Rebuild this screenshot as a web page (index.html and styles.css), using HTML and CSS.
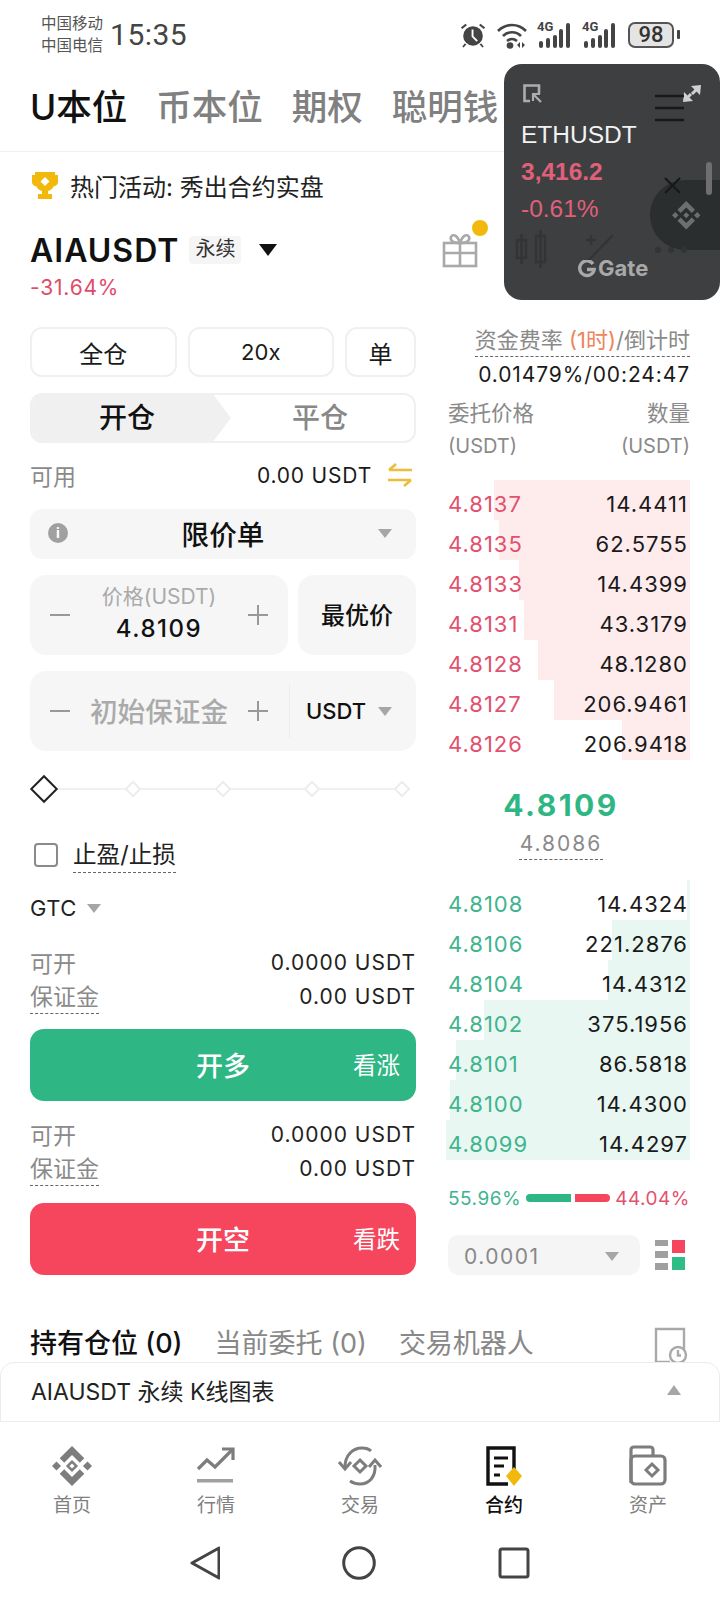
FILE: index.html
```html
<!DOCTYPE html>
<html lang="zh">
<head>
  <meta charset="UTF-8" />
  <meta name="viewport" content="width=device-width, initial-scale=1.0"/>
  <title>合约</title>
  <link rel="stylesheet" href="styles.css">
</head>
<body>
<div class="page">

  <header class="statusbar">
    <div class="carrier"><span>中国移动</span><span>中国电信</span></div>
    <div class="clock">15:35</div>
    <div class="status-icons">
      <svg width="28" height="28" viewBox="0 0 30 28"><g fill="#444"><circle cx="15" cy="15" r="10.500"/><path d="M2 6l5-4 1.500 1.600-5 4zM28 6l-5-4-1.500 1.600 5 4zM6 23l-2.500 3.500 1.500 1 3-3.500zM24 23l2.500 3.500-1.500 1-3-3.500z"/></g><path d="M14.500 8v7.500l5 5" fill="none" stroke="#fff" stroke-width="2"/></svg>
      <svg width="32" height="28" viewBox="0 0 32 28"><g fill="none" stroke="#444" stroke-width="2.600"><path d="M2 10c8-8 20-8 28 0"/><path d="M7 15c5-5 13-5 18 0"/><path d="M11 20c3-2.500 7-2.500 10 0"/></g><circle cx="14" cy="24.500" r="3.300" fill="#444"/><path d="M24 21v6l-3-3zM26 21v6l3-3z" fill="#444"/></svg>
      <div class="signal"><span class="signal-label">4G</span><svg width="36" height="28" viewBox="0 0 36 28"><g fill="#444"><rect x="2" y="20" width="4" height="7" rx="2"/><rect x="9" y="17" width="4" height="10" rx="2"/><rect x="16" y="14" width="4" height="13" rx="2"/><rect x="22" y="8" width="4" height="19" rx="2"/><rect x="29" y="2" width="4" height="25" rx="2"/></g></svg></div>
      <div class="signal"><span class="signal-label">4G</span><svg width="36" height="28" viewBox="0 0 36 28"><g fill="#444"><rect x="2" y="20" width="4" height="7" rx="2"/><rect x="9" y="17" width="4" height="10" rx="2"/><rect x="16" y="14" width="4" height="13" rx="2"/><rect x="22" y="8" width="4" height="19" rx="2"/><rect x="29" y="2" width="4" height="25" rx="2"/></g></svg></div>
      <div class="battery">98</div><div class="battery-cap"></div>
    </div>
  </header>

  <nav class="top-tabs">
    <span class="top-tab active">U本位</span>
    <span class="top-tab">币本位</span>
    <span class="top-tab">期权</span>
    <span class="top-tab">聪明钱</span>
  </nav>

  <div class="promo">
    <svg width="26" height="27" viewBox="0 0 26 27"><path d="M3 0h20v3h3v7c0 2.500-2 4-4.500 4.500-1 2.500-3.500 4-5.500 4.500v3h4v5H6v-5h4v-3c-2-.500-4.500-2-5.500-4.500C2 14 0 12.500 0 10V3h3z" fill="#f0b90b"/><path d="M13 5l4.500 4.500L13 14 8.500 9.500z" fill="#fff"/></svg>
    <span>热门活动: 秀出合约实盘</span>
  </div>

  <div class="symbol">
    <div class="symbol-row">
      <span class="symbol-name">AIAUSDT</span>
      <span class="chip">永续</span>
      <span class="tri-down"></span>
      <div class="gift">
        <svg width="36" height="36" viewBox="0 0 36 36"><g fill="none" stroke="#a9a9a9" stroke-width="2.600"><rect x="2" y="11" width="32" height="23"/><path d="M2 21h32M18 11v23"/><path d="M18 11c-8 0-10-3-9-6s6-3 9 6c3-9 8-9 9-6s-1 6-9 6z"/></g></svg>
        <span class="gift-dot"></span>
      </div>
    </div>
    <div class="symbol-change">-31.64%</div>
  </div>

  <main class="trade">
    <section class="form-col">
      <div class="lev-row">
        <button class="lev-btn">全仓</button>
        <button class="lev-btn lev-num">20x</button>
        <button class="lev-btn lev-btn-small">单</button>
      </div>

      <div class="side-switch">
        <div class="side-on">开仓</div>
        <div class="side-off">平仓</div>
      </div>

      <div class="avail">
        <span class="muted">可用</span>
        <span class="avail-val">0.00 USDT
          <svg width="26" height="24" viewBox="0 0 26 24"><g fill="none" stroke="#ecbc3a" stroke-width="2.600"><path d="M25 7H2M9 1L2 7"/><path d="M1 17h23M17 23l7-6"/></g></svg>
        </span>
      </div>

      <div class="order-type">
        <span class="info-dot">i</span>
        <span class="order-type-name">限价单</span>
        <span class="tri-small"></span>
      </div>

      <div class="price-row">
        <div class="stepper price-box">
          <span class="step minus"></span>
          <div class="price-mid"><span class="price-label">价格(USDT)</span><span class="price-val">4.8109</span></div>
          <span class="step plus"></span>
        </div>
        <div class="best">最优价</div>
      </div>

      <div class="stepper margin-box">
        <span class="step minus"></span>
        <span class="margin-label">初始保证金</span>
        <span class="step plus"></span>
        <div class="margin-unit">USDT <span class="tri-small"></span></div>
      </div>

      <div class="slider">
        <span class="knob"></span>
        <span class="tick"></span><span class="tick"></span><span class="tick"></span><span class="tick"></span>
      </div>

      <div class="tpsl">
        <span class="checkbox"></span>
        <span class="dotted tpsl-text">止盈/止损</span>
      </div>

      <div class="gtc">GTC <span class="tri-small"></span></div>

      <div class="info-row first"><span class="muted">可开</span><span>0.0000 USDT</span></div>
      <div class="info-row"><span class="muted dotted">保证金</span><span>0.00 USDT</span></div>
      <button class="action buy"><span></span><span class="action-main">开多</span><span class="action-sub">看涨</span></button>

      <div class="info-row first"><span class="muted">可开</span><span>0.0000 USDT</span></div>
      <div class="info-row"><span class="muted dotted">保证金</span><span>0.00 USDT</span></div>
      <button class="action sell"><span></span><span class="action-main">开空</span><span class="action-sub">看跌</span></button>
    </section>

    <section class="book-col">
      <div class="funding"><span class="dotted">资金费率 <em>(1时)</em>/倒计时</span></div>
      <div class="funding-val">0.01479%/00:24:47</div>
      <div class="book-head"><span>委托价格</span><span>数量</span></div>
      <div class="book-unit"><span>(USDT)</span><span>(USDT)</span></div>

      <div class="asks">
        <div class="row"><i class="bar" style="width:196px"></i><span class="px">4.8137</span><span class="qty">14.4411</span></div>
        <div class="row"><i class="bar" style="width:191px"></i><span class="px">4.8135</span><span class="qty">62.5755</span></div>
        <div class="row"><i class="bar" style="width:171px"></i><span class="px">4.8133</span><span class="qty">14.4399</span></div>
        <div class="row"><i class="bar" style="width:166px"></i><span class="px">4.8131</span><span class="qty">43.3179</span></div>
        <div class="row"><i class="bar" style="width:152px"></i><span class="px">4.8128</span><span class="qty">48.1280</span></div>
        <div class="row"><i class="bar" style="width:136px"></i><span class="px">4.8127</span><span class="qty">206.9461</span></div>
        <div class="row"><i class="bar" style="width:68px"></i><span class="px">4.8126</span><span class="qty">206.9418</span></div>
      </div>

      <div class="mid-price">4.8109</div>
      <div class="mark-price"><span class="dotted">4.8086</span></div>

      <div class="bids">
        <div class="row"><i class="bar" style="width:3px"></i><span class="px">4.8108</span><span class="qty">14.4324</span></div>
        <div class="row"><i class="bar" style="width:78px"></i><span class="px">4.8106</span><span class="qty">221.2876</span></div>
        <div class="row"><i class="bar" style="width:82px"></i><span class="px">4.8104</span><span class="qty">14.4312</span></div>
        <div class="row"><i class="bar" style="width:206px"></i><span class="px">4.8102</span><span class="qty">375.1956</span></div>
        <div class="row"><i class="bar" style="width:234px"></i><span class="px">4.8101</span><span class="qty">86.5818</span></div>
        <div class="row"><i class="bar" style="width:240px"></i><span class="px">4.8100</span><span class="qty">14.4300</span></div>
        <div class="row"><i class="bar" style="width:244px"></i><span class="px">4.8099</span><span class="qty">14.4297</span></div>
      </div>

      <div class="ratio">
        <span class="ratio-buy">55.96%</span>
        <span class="ratio-bars"><i class="ratio-g"></i><i class="ratio-r"></i></span>
        <span class="ratio-sell">44.04%</span>
      </div>

      <div class="depth-row">
        <div class="depth-select"><span>0.0001</span><span class="tri-small"></span></div>
        <svg width="30" height="30" viewBox="0 0 30 30"><g fill="#a0a0a0"><rect x="0" y="0" width="13" height="6"/><rect x="0" y="11" width="13" height="7"/><rect x="0" y="23" width="13" height="7"/></g><rect x="17" y="0" width="13" height="13" fill="#f6465d"/><rect x="17" y="17" width="13" height="13" fill="#2ebd85"/></svg>
      </div>
    </section>
  </main>

  <div class="pos-tabs">
    <span class="pos-tab active">持有仓位 (0)</span>
    <span class="pos-tab">当前委托 (0)</span>
    <span class="pos-tab">交易机器人</span>
    <svg class="pos-icon" width="34" height="40" viewBox="0 0 34 40"><g fill="none" stroke="#a9a9a9" stroke-width="2.400"><path d="M16 35H2V2h28v20"/><circle cx="24" cy="28" r="8" fill="#fff"/><path d="M24 23v5.500h3"/></g></svg>
  </div>

  <div class="kline">
    <span>AIAUSDT 永续 K线图表</span>
    <span class="tri-up"></span>
  </div>

  <nav class="bottom-nav">
    <div class="nav-item">
      <svg width="40" height="42" viewBox="0 0 126.610 126.610"><g fill="#7d7d7d"><path d="M38.730 53.200l24.590-24.580 24.600 24.600 14.300-14.310L63.320 0 24.430 38.900z"/><path d="M0 63.310L14.300 49l14.310 14.310-14.310 14.300z"/><path d="M38.730 73.410L63.320 98l24.600-24.600 14.310 14.290-38.900 38.910-38.910-38.880z"/><path d="M98 63.310L112.300 49l14.310 14.310-14.310 14.300z"/><path d="M63.320 44l19.300 19.300-19.300 19.300-19.300-19.300z"/></g><path d="M63.320 55l8.300 8.300-8.300 8.300-8.300-8.300z" fill="#fff"/></svg>
      <span>首页</span>
    </div>
    <div class="nav-item">
      <svg width="40" height="42" viewBox="0 0 40 42"><g fill="none" stroke="#7d7d7d" stroke-width="3.200"><path d="M2 24l9-9 8 7L36 5"/><path d="M26 4h11v11"/></g><rect x="1" y="34" width="36" height="3.500" fill="#a0a0a0"/></svg>
      <span>行情</span>
    </div>
    <div class="nav-item">
      <svg width="46" height="42" viewBox="0 0 46 42"><g fill="none" stroke="#7d7d7d" stroke-width="3"><path d="M8 22C8 10 16 3 25 3c4 0 7 1 9 3"/><path d="M38 20c1 12-6 19-15 19-4 0-7-1-10-3"/><path d="M2 17l6 7 6-7"/><path d="M32 22l6-7 6 7"/><path d="M23 15l6 6-6 6-6-6z"/></g></svg>
      <span>交易</span>
    </div>
    <div class="nav-item on">
      <svg width="40" height="42" viewBox="0 0 40 42"><path d="M30 24V3H4v36h20" fill="none" stroke="#111" stroke-width="3.400"/><path d="M10 13h14M10 21h10M10 30h6" stroke="#111" stroke-width="3" fill="none"/><path d="M30 22l8 9-8 10-8-10z" fill="#f0b90b"/></svg>
      <span>合约</span>
    </div>
    <div class="nav-item">
      <svg width="40" height="42" viewBox="0 0 40 42"><g fill="none" stroke="#7d7d7d" stroke-width="3.200"><path d="M3 38V5c0-1.500 1-3 3-3h16c2 0 3 1.500 3 3v6"/><rect x="3" y="11" width="34" height="28" rx="4"/></g><path d="M24 19l6 6-6 6-6-6z" fill="none" stroke="#7d7d7d" stroke-width="3"/></svg>
      <span>资产</span>
    </div>
  </nav>

  <div class="sysnav">
    <svg width="30" height="34" viewBox="0 0 30 34"><path d="M29 2v30L2 17z" fill="none" stroke="#444" stroke-width="3" stroke-linejoin="round"/></svg>
    <svg width="34" height="34" viewBox="0 0 34 34"><circle cx="17" cy="17" r="15.300" fill="none" stroke="#444" stroke-width="3"/></svg>
    <svg width="32" height="32" viewBox="0 0 32 32"><rect x="2" y="2" width="28" height="28" rx="2" fill="none" stroke="#444" stroke-width="3"/></svg>
  </div>

  <aside class="float-card">
    <svg class="float-layer" width="216" height="236" viewBox="0 0 216 236">
      <g fill="none" stroke="#adadad" stroke-width="2.600"><path d="M35 30V21.500H20.500V37H26"/><path d="M37 38l-8-8m0 7v-7h7" stroke-width="2.200"/></g>
      <g fill="#d0d0d0"><path d="M197 21l-10 1 9 9zM179 38l10-1-9-9z"/></g>
      <path d="M193 25l-5 5M183 34l4-4" stroke="#d0d0d0" stroke-width="3"/>
      <path d="M151 32h29M151 44h29M151 56h29" stroke="#17181a" stroke-width="2.600"/>
      <path d="M216 116h-35a35 35 0 0 0 0 70h35z" fill="#2b2e2f"/>
      <path d="M161 114l15 15M176 114l-15 15" stroke="#17181a" stroke-width="2.200"/>
      <g transform="translate(168,137) scale(.225)" fill="#6e6e6e"><path d="M38.730 53.200l24.590-24.580 24.600 24.600 14.300-14.310L63.320 0 24.430 38.900z"/><path d="M0 63.310L14.300 49l14.310 14.310-14.310 14.300z"/><path d="M38.730 73.410L63.320 98l24.600-24.600 14.310 14.290-38.900 38.910-38.910-38.880z"/><path d="M98 63.310L112.300 49l14.310 14.310-14.310 14.300z"/><path d="M63.320 50l13.300 13.300-13.300 13.300-13.300-13.300z"/></g>
      <rect x="202" y="98" width="6" height="33" rx="3" fill="#6f6f6f"/>
      <g fill="none" stroke="#323436" stroke-width="2.400"><rect x="13" y="176" width="9" height="18"/><path d="M17.500 170v30"/><rect x="32" y="172" width="9" height="26"/><path d="M36.500 166v38"/><path d="M82 199l27-28"/><path d="M87 171v10M82 176h10"/></g>
      <g fill="#323436"><circle cx="154" cy="186" r="3"/><circle cx="167" cy="186" r="3"/><circle cx="180" cy="186" r="3"/></g>
    </svg>
    <div class="float-name">ETHUSDT</div>
    <div class="float-price">3,416.2</div>
    <div class="float-pct">-0.61%</div>
    <div class="float-brand">
      <svg width="18" height="18" viewBox="0 0 18 18"><path d="M15 4a7.300 7.300 0 1 0 1.200 5.500H9" fill="none" stroke="#a8a8a8" stroke-width="3.400"/></svg>
      <span>Gate</span>
    </div>
  </aside>

</div>
</body>
</html>
```

FILE: styles.css
```css
* {
  box-sizing: border-box;
}
body {
  margin: 0;
  background: #fff;
  color: #1a1a1a;
  font-family: Inter, "Noto Sans CJK SC", sans-serif;
}
.page {
  position: relative;
  width: 720px;
  height: 1600px;
  overflow: hidden;
}

/* status bar */
.statusbar {
  display: flex;
  align-items: center;
  height: 64px;
  padding: 2px 40px 0 41px;
  color: #555;
}
.carrier {
  display: flex;
  flex-direction: column;
  font-size: 15.500px;
  line-height: 22px;
  font-family: "Noto Sans CJK SC", sans-serif;
}
.clock {
  margin-left: 7px;
  padding-top: 3px;
  font-family: Roboto, sans-serif;
  font-size: 30px;
  letter-spacing: .5px;
  color: #444;
}
.status-icons {
  display: flex;
  align-items: center;
  gap: 9px;
  margin-left: auto;
  padding-top: 3px;
}
.signal {
  position: relative;
  width: 36px;
  height: 28px;
}
.signal-label {
  position: absolute;
  left: 0;
  top: -2px;
  font-family: Roboto, sans-serif;
  font-size: 13px;
  font-weight: 700;
  color: #444;
}
.battery {
  width: 46px;
  height: 26px;
  margin-left: 1px;
  border: 2px solid #555;
  border-radius: 7px;
  background: #e4e4e4;
  text-align: center;
  font-family: Roboto, sans-serif;
  font-size: 22px;
  font-weight: 500;
  line-height: 22px;
  color: #333;
}
.battery-cap {
  width: 3px;
  height: 9px;
  margin-left: -6px;
  background: #444;
  border-radius: 1px;
}

/* top tabs */
.top-tabs {
  display: flex;
  align-items: center;
  gap: 29px;
  height: 88px;
  padding: 1px 30px 0;
  border-bottom: 1px solid #efefef;
  white-space: nowrap;
}
.top-tab {
  font-size: 35.500px;
  font-weight: 500;
  line-height: 1;
  color: #808080;
}
.top-tab.active {
  color: #111;
}

/* promo */
.promo {
  display: flex;
  align-items: center;
  gap: 12px;
  height: 68px;
  padding: 0 0 1px 32px;
  font-size: 24px;
  color: #222;
}

/* symbol */
.symbol {
  height: 107px;
  padding: 0 30px;
}
.symbol-row {
  display: flex;
  align-items: center;
  height: 60px;
}
.symbol-name {
  font-size: 32px;
  font-weight: 600;
  letter-spacing: 1px;
  color: #111;
}
.chip {
  margin-left: 10px;
  padding: 0 6px;
  height: 28px;
  line-height: 27px;
  background: #f5f5f5;
  border-radius: 4px;
  font-size: 20px;
  color: #333;
}
.tri-down {
  margin-left: 18px;
  border-left: 9px solid transparent;
  border-right: 9px solid transparent;
  border-top: 12px solid #111;
}
.gift {
  position: relative;
  margin-left: auto;
  margin-right: 212px;
  height: 36px;
}
.gift-dot {
  position: absolute;
  right: -10px;
  top: -12px;
  width: 16px;
  height: 16px;
  background: #f0b90b;
  border-radius: 50%;
}
.symbol-change {
  font-size: 21px;
  letter-spacing: .8px;
  color: #e14a68;
  line-height: 24px;
  margin-top: -4px;
}

/* trade */
.trade {
  display: flex;
  justify-content: space-between;
  height: 948px;
  padding: 0 30px;
}
.form-col {
  width: 386px;
}
.book-col {
  width: 242px;
}

.lev-row {
  display: flex;
  gap: 11px;
}
.lev-btn {
  flex: 1;
  height: 50px;
  border: 2px solid #f0f0f0;
  border-radius: 12px;
  background: #fff;
  font-family: inherit;
  font-size: 24px;
  color: #1a1a1a;
}
.lev-num {
  font-size: 22px;
}
.lev-btn-small {
  flex: 0 0 71px;
}
.side-switch {
  display: flex;
  margin-top: 16px;
  height: 50px;
  border: 2px solid #f0f0f0;
  border-radius: 12px;
  overflow: hidden;
  font-size: 28px;
  font-weight: 500;
  line-height: 46px;
}
.side-on {
  width: 201px;
  margin: -2px 0 -2px -2px;
  padding-left: 69px;
  line-height: 50px;
  background: #f0f0f0;
  clip-path: polygon(0 0, 182px 0, 201px 50%, 182px 100%, 0 100%);
  color: #111;
}
.side-off {
  padding-left: 61px;
  color: #888;
}
.muted {
  color: #8a8a8a;
  font-size: 23px;
}
.avail {
  display: flex;
  align-items: center;
  justify-content: space-between;
  height: 66px;
  padding-bottom: 2px;
  font-size: 21px;
}
.avail-val {
  display: flex;
  align-items: center;
  gap: 15px;
  padding-right: 3px;
  letter-spacing: .8px;
}
.order-type {
  display: flex;
  align-items: center;
  height: 50px;
  padding: 0 24px 2px 18px;
  background: #f6f6f6;
  border-radius: 12px;
}
.info-dot {
  width: 20px;
  height: 20px;
  border-radius: 50%;
  background: #a0a0a0;
  color: #fff;
  text-align: center;
  font-size: 14px;
  font-weight: 700;
  line-height: 20px;
}
.order-type-name {
  flex: 1;
  text-align: center;
  font-size: 27.600px;
  font-weight: 500;
  color: #111;
}
.tri-small {
  display: inline-block;
  border-left: 7px solid transparent;
  border-right: 7px solid transparent;
  border-top: 9px solid #a6a6a6;
  vertical-align: middle;
}
.price-row {
  display: flex;
  gap: 10px;
  margin-top: 16px;
}
.stepper {
  display: flex;
  align-items: center;
  height: 80px;
  background: #f6f6f6;
  border-radius: 16px;
  padding-left: 20px;
}
.price-box {
  width: 258px;
  padding-right: 20px;
}
.step {
  flex: none;
  width: 20px;
  height: 20px;
  background: linear-gradient(#999, #999) center / 100% 2px no-repeat;
}
.step.plus {
  background:
    linear-gradient(#999, #999) center / 100% 2px no-repeat,
    linear-gradient(#999, #999) center / 2px 100% no-repeat;
}
.price-mid {
  flex: 1;
  display: flex;
  flex-direction: column;
  align-items: center;
}
.price-label {
  font-size: 21px;
  line-height: 28px;
  color: #aaa;
}
.price-val {
  font-size: 24px;
  font-weight: 500;
  letter-spacing: 1.500px;
  line-height: 36px;
  color: #111;
}
.best {
  flex: 1;
  display: flex;
  align-items: center;
  justify-content: center;
  padding-bottom: 3px;
  background: #f6f6f6;
  border-radius: 16px;
  font-size: 24px;
  font-weight: 500;
  color: #111;
}
.margin-box {
  margin-top: 16px;
}
.margin-label {
  width: 178px;
  padding-bottom: 3px;
  text-align: center;
  font-size: 27.600px;
  font-weight: 500;
  color: #aaa;
}
.margin-box .plus {
  margin-right: 21px;
}
.margin-unit {
  display: flex;
  align-items: center;
  gap: 12px;
  height: 54px;
  padding-left: 16px;
  border-left: 1px solid #ececec;
  font-size: 22px;
  font-weight: 500;
  color: #111;
}
.slider {
  display: flex;
  align-items: center;
  justify-content: space-between;
  height: 76px;
  padding: 0 8px 0 4px;
  background: linear-gradient(#f0f0f0, #f0f0f0) no-repeat 0 50% / 100% 2px;
  background-origin: content-box;
}
.knob {
  width: 20px;
  height: 20px;
  margin-right: -5px;
  transform: rotate(45deg);
  background: #fff;
  border: 2px solid #222;
}
.tick {
  width: 12px;
  height: 12px;
  transform: rotate(45deg);
  background: #fff;
  border: 2px solid #ececec;
}
.tpsl {
  display: flex;
  align-items: center;
  gap: 15px;
  height: 56px;
  padding-left: 4px;
  font-size: 23.600px;
}
.checkbox {
  width: 24px;
  height: 24px;
  border: 2px solid #8a8a8a;
  border-radius: 4px;
}
.dotted {
  border-bottom: 1px dashed #666;
}
.tpsl-text {
  line-height: 34px;
  color: #222;
}
.gtc {
  display: flex;
  align-items: center;
  gap: 10px;
  height: 50px;
  font-size: 22px;
  letter-spacing: .5px;
  color: #222;
}
.info-row {
  display: flex;
  align-items: center;
  justify-content: space-between;
  height: 34px;
  font-size: 21px;
  letter-spacing: 1px;
  color: #222;
}
.info-row .muted {
  letter-spacing: 0;
}
.info-row.first {
  margin-top: 12px;
}
.action + .info-row.first {
  margin-top: 16px;
}
.info-row .dotted {
  line-height: 32px;
  margin-bottom: -2px;
}
.action {
  display: grid;
  grid-template-columns: 1fr auto 1fr;
  align-items: center;
  width: 100%;
  height: 72px;
  margin-top: 16px;
  padding: 0 16px 2px;
  border: 0;
  border-radius: 14px;
  color: #fff;
  font-family: inherit;
}
.action.buy {
  background: #2eb784;
}
.action.sell {
  background: #f6465d;
  margin-top: 18px;
}
.action-main {
  font-size: 27px;
  font-weight: 500;
}
.action-sub {
  justify-self: end;
  font-size: 23.500px;
  white-space: nowrap;
}

/* order book */
.funding {
  height: 30px;
  text-align: right;
  font-size: 22px;
  line-height: 26px;
  color: #8a8a8a;
  white-space: nowrap;
}
.funding em {
  font-style: normal;
  color: #f0845a;
}
.funding .dotted {
  display: inline-block;
  height: 30px;
}
.funding-val {
  margin-top: 5px;
  height: 26px;
  line-height: 26px;
  text-align: right;
  font-size: 21px;
  letter-spacing: .9px;
  color: #1a1a1a;
  white-space: nowrap;
}
.book-head,
.book-unit {
  display: flex;
  justify-content: space-between;
  color: #8a8a8a;
  white-space: nowrap;
}
.book-head {
  margin-top: 12px;
  height: 26px;
  font-size: 21.500px;
  line-height: 26px;
}
.book-unit {
  margin-top: 7px;
  height: 26px;
  font-size: 20px;
  line-height: 26px;
}
.asks {
  margin-top: 21px;
  --px: #e2516e;
  --bar: #feeced;
}
.bids {
  margin-top: 21px;
  --px: #3fb48e;
  --bar: #e8f7f1;
}
.row {
  position: relative;
  display: flex;
  align-items: center;
  justify-content: space-between;
  height: 40px;
  padding: 7px 2px 0 0;
  font-size: 22px;
  letter-spacing: 1px;
}
.bar {
  position: absolute;
  top: 0;
  right: 0;
  bottom: 0;
  background: var(--bar);
}
.px {
  position: relative;
  color: var(--px);
}
.qty {
  position: relative;
  color: #1a1a1a;
}
.mid-price {
  margin-top: 25px;
  padding-right: 16px;
  height: 40px;
  line-height: 40px;
  text-align: center;
  font-size: 30px;
  font-weight: 700;
  letter-spacing: 2.500px;
  color: #2eb784;
}
.mark-price {
  margin-top: 4px;
  padding-right: 16px;
  height: 30px;
  text-align: center;
  font-size: 21px;
  letter-spacing: 2px;
  color: #8a8a8a;
  line-height: 30px;
}
.mark-price .dotted {
  display: inline-block;
  height: 31px;
  padding: 0 1px;
}
.ratio {
  display: flex;
  align-items: center;
  justify-content: space-between;
  height: 26px;
  margin-top: 25px;
  font-size: 19px;
  letter-spacing: .5px;
  white-space: nowrap;
}
.ratio-buy {
  color: #3fb48e;
}
.ratio-sell {
  color: #e2516e;
}
.ratio-bars {
  display: flex;
  gap: 4px;
}
.ratio-g,
.ratio-r {
  height: 8px;
}
.ratio-g {
  width: 45px;
  background: #2eb784;
  border-radius: 4px 0 0 4px;
}
.ratio-r {
  width: 35px;
  background: #f6465d;
  border-radius: 0 4px 4px 0;
}
.depth-row {
  display: flex;
  align-items: center;
  justify-content: space-between;
  margin-top: 24px;
  padding-right: 5px;
}
.depth-select {
  display: flex;
  align-items: center;
  justify-content: space-between;
  width: 192px;
  height: 40px;
  padding: 2px 21px 0 16px;
  background: #f5f5f5;
  border-radius: 10px;
  font-size: 21px;
  letter-spacing: 1.500px;
  color: #888;
}

/* positions */
.pos-tabs {
  display: flex;
  align-items: center;
  gap: 32px;
  height: 87px;
  padding: 50px 30px 0;
  overflow: hidden;
  white-space: nowrap;
  font-size: 27px;
}
.pos-tab {
  font-weight: 400;
  line-height: 37px;
  color: #888;
}
.pos-tab.active {
  font-weight: 500;
  color: #111;
}
.pos-icon {
  margin-left: auto;
  margin-right: 2px;
  margin-top: 6px;
}
.kline {
  position: relative;
  display: flex;
  align-items: center;
  justify-content: space-between;
  height: 60px;
  padding: 0 38px 4px 30px;
  background: #fff;
  border: 1px solid #ececec;
  border-radius: 14px 14px 0 0;
  font-size: 23px;
  color: #222;
}
.tri-up {
  border-left: 7px solid transparent;
  border-right: 7px solid transparent;
  border-bottom: 10px solid #a6a6a6;
}

/* bottom nav */
.bottom-nav {
  display: grid;
  grid-template-columns: repeat(5, 144px);
  height: 103px;
  padding-top: 23px;
}
.nav-item {
  display: flex;
  flex-direction: column;
  align-items: center;
  font-size: 19px;
  color: #808080;
}
.nav-item span {
  margin-top: 5px;
  line-height: 28px;
}
.nav-item.on {
  color: #111;
}
.nav-item.on span {
  font-weight: 500;
}
.sysnav {
  display: flex;
  align-items: center;
  justify-content: center;
  gap: 122px;
  height: 75px;
}

/* floating ticker */
.float-card {
  position: absolute;
  left: 504px;
  top: 64px;
  width: 216px;
  height: 236px;
  padding: 52px 0 0 17px;
  background: #3d3f41;
  border-radius: 18px;
  overflow: hidden;
  font-family: "Liberation Sans", sans-serif;
}
.float-layer {
  position: absolute;
  left: 0;
  top: 0;
}
.float-name,
.float-price,
.float-pct {
  position: relative;
  height: 37px;
  line-height: 37px;
  font-size: 24.500px;
  color: #f2f2f2;
  white-space: nowrap;
}
.float-price {
  font-weight: 700;
  color: #e0607a;
}
.float-pct {
  color: #e0607a;
}
.float-brand {
  position: absolute;
  left: 74px;
  top: 191px;
  display: flex;
  align-items: center;
  gap: 2px;
  font-family: Inter, sans-serif;
  font-size: 22px;
  font-weight: 700;
  line-height: 27px;
  color: #a8a8a8;
}
```
